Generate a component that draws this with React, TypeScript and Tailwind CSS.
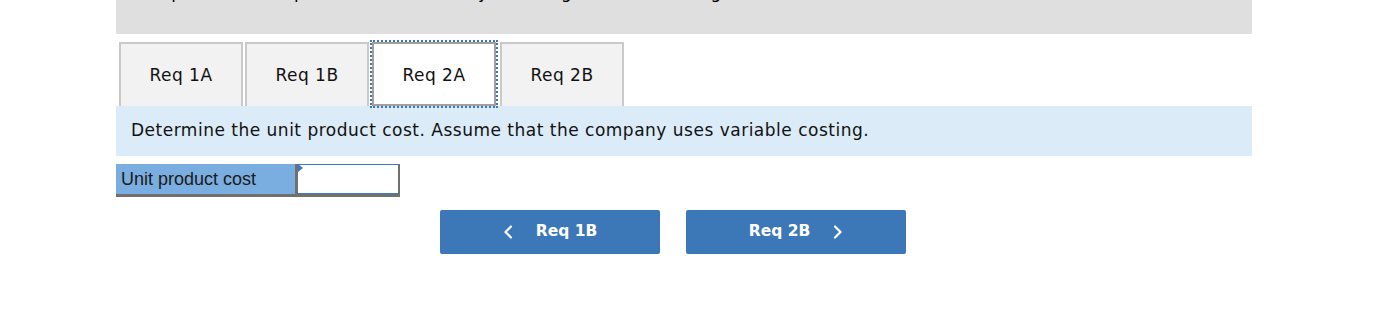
import React from "react";

const tabs = ["Req 1A", "Req 1B", "Req 2A", "Req 2B"];
const margins = ["ml-[3px]", "ml-[2px]", "ml-[3px]", "ml-[4px]"];

function Chevron({ dir }: { dir: "left" | "right" }) {
  return (
    <svg width="10" height="14" viewBox="0 0 10 14" fill="none">
      {dir === "left" ? (
        <path d="M8 1.5 L2.5 7 L8 12.5" stroke="white" strokeWidth="2.2" strokeLinecap="round" strokeLinejoin="round" />
      ) : (
        <path d="M2 1.5 L7.5 7 L2 12.5" stroke="white" strokeWidth="2.2" strokeLinecap="round" strokeLinejoin="round" />
      )}
    </svg>
  );
}

export default function App() {
  return (
    <div className="w-[1396px] h-[336px] bg-white overflow-hidden" style={{ fontFamily: '"DejaVu Sans", Verdana, sans-serif' }}>
      <div className="ml-[116px] w-[1136px]">
        <div className="h-[34px] bg-[#dfdfdf] overflow-hidden">
          <div className="mt-[-16px] pl-[15px] text-[17px] tracking-[0.5px] leading-[16px] text-black whitespace-nowrap">
            Compute the unit product cost for the year using variable costing.
          </div>
        </div>
        <div className="flex pt-[8px] h-[72px]">
          {tabs.map((t, i) =>
            i === 2 ? (
              <div
                key={t}
                className={`${margins[i]} relative w-[124px] h-[64px] bg-white border-2 border-[#a0a0a0] outline-2 outline-dotted outline-[#3b74bd] flex items-center justify-center text-[17px] tracking-[0.5px] text-[#111] pt-[4px] z-10`}
              >
                {t}
              </div>
            ) : (
              <div
                key={t}
                className={`${margins[i]} w-[124px] h-[64px] bg-[#f2f2f2] border-2 border-b-0 border-[#c9c9c9] flex items-center justify-center text-[17px] tracking-[0.5px] text-[#111] pt-[2px]`}
              >
                {t}
              </div>
            )
          )}
        </div>
        <div className="h-[50px] bg-[#dbebf8] flex items-center pl-[15px] text-[17px] tracking-[0.5px] text-[#111]">
          Determine the unit product cost. Assume that the company uses variable costing.
        </div>
        <div className="mt-[8px] flex h-[33px]">
          <div
            className="w-[179px] bg-[#7aade0] border-b-[3px] border-[#707070] pl-[5px] flex items-center text-[18px] text-[#1a1a1a]"
            style={{ fontFamily: '"Liberation Sans", Arial, sans-serif' }}
          >
            Unit product cost
          </div>
          <div className="relative w-[105px] bg-white border-l-[3px] border-r-[2px] border-b-[3px] border-[#707070]">
            <div className="absolute inset-0 border-t border-b border-[#3d78c0]" />
            <div className="absolute left-0 top-0 w-0 h-0 border-t-[4px] border-b-[4px] border-l-[5px] border-t-transparent border-b-transparent border-l-[#3d78c0]" />
          </div>
        </div>
        <div className="mt-[13px] ml-[324px] flex gap-[26px]">
          <button className="w-[220px] h-[44px] bg-[#3c78b7] rounded-[2px] flex items-center justify-center gap-[23px] text-white font-bold text-[15.5px]">
            <Chevron dir="left" />
            <span>Req 1B</span>
          </button>
          <button className="w-[220px] h-[44px] bg-[#3c78b7] rounded-[2px] flex items-center justify-center gap-[23px] text-white font-bold text-[15.5px]">
            <span>Req 2B</span>
            <Chevron dir="right" />
          </button>
        </div>
      </div>
    </div>
  );
}
